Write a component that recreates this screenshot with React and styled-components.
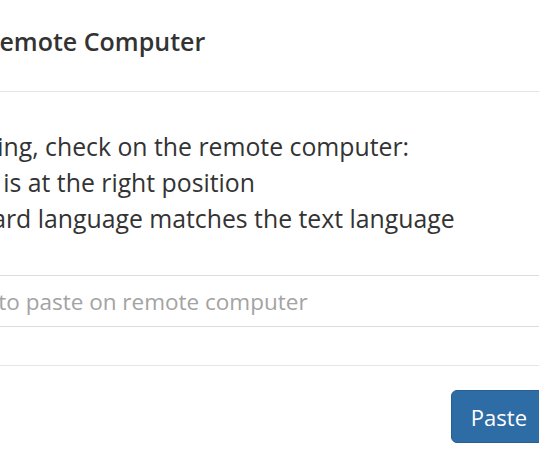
import React from "react";
import styled, { createGlobalStyle } from "styled-components";

const Global = createGlobalStyle`
  html, body { margin: 0; padding: 0; background: #fff; overflow: hidden; }
  body { font-family: "Open Sans", "Noto Sans", sans-serif; color: #333; }
`;

const Modal = styled.div`
  margin-left: -158px;
  width: 727px;
  background: #fff;
`;

const Header = styled.div`
  padding: 23px 22px 32px 31px;
  border-bottom: 1px solid #e5e5e5;
`;

const Title = styled.h4`
  margin: 0;
  font-size: 25px;
  line-height: 36px;
  font-weight: 600;
  color: #333;
  white-space: nowrap;
`;

const Body = styled.div`
  padding: 36px 22px 38px;
`;

const Text = styled.p`
  margin: 0;
  font-size: 24.8px;
  line-height: 36px;
  white-space: nowrap;
`;

const List = styled.ul`
  margin: 0;
  padding-left: ${(p) => p.$indent}px;
  list-style: none;
`;

const Item = styled.li`
  font-size: 24.8px;
  line-height: 36px;
  white-space: nowrap;
`;

const Input = styled.input`
  display: block;
  box-sizing: border-box;
  width: 100%;
  height: 52px;
  margin-top: 39px;
  padding: 0 18px 0 25px;
  border: 1px solid #ddd;
  border-radius: 6px;
  font-family: inherit;
  font-size: 22.5px;
  color: #333;
  outline: none;
  &::placeholder { color: #a3a3a3; }
`;

const Footer = styled.div`
  display: flex;
  justify-content: flex-end;
  padding: 24px 22px 24px;
  border-top: 1px solid #e5e5e5;
`;

const Button = styled.button`
  height: 53px;
  padding: 0 19px;
  border: 1px solid #285f92;
  border-radius: 6px;
  background: #2e6ca5;
  color: #fff;
  font-family: inherit;
  font-size: 22px;
  cursor: pointer;
`;

export default function App() {
  return (
    <>
      <Global />
      <Modal>
        <Header>
          <Title>Paste on Remote Computer</Title>
        </Header>
        <Body>
          <Text>Before pasting, check on the remote computer:</Text>
          <List $indent={9.5}>
            <Item>The cursor is at the right position</Item>
            <Item>The keyboard language matches the text language</Item>
          </List>
          <Input placeholder="Enter text to paste on remote computer" />
        </Body>
        <Footer>
          <Button>Paste</Button>
        </Footer>
      </Modal>
    </>
  );
}
